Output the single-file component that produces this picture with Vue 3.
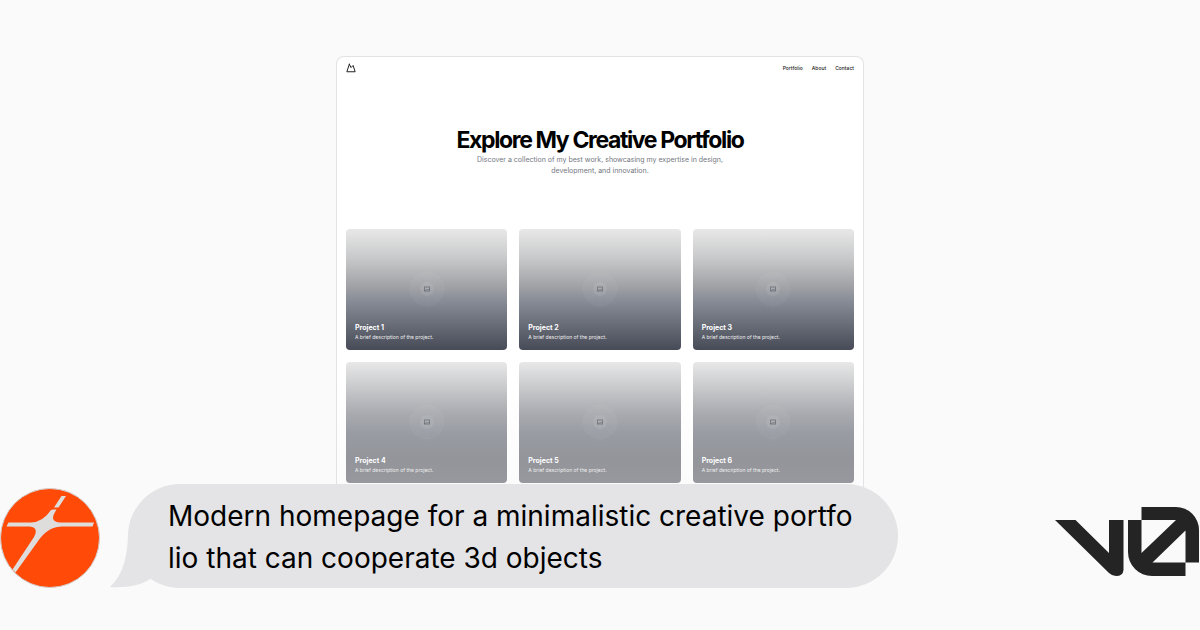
<script setup>
const links = ['Portfolio', 'About', 'Contact']
const projects = [1, 2, 3, 4, 5, 6]
</script>

<template>
  <main class="page">
    <section class="preview">
      <header class="bar">
        <a href="#" class="brand" aria-label="Home">
          <svg viewBox="0 0 24 24" fill="none" stroke="#222" stroke-width="2.4" stroke-linecap="round" stroke-linejoin="round">
            <path d="m8 3 4 8 5-5 5 15H2L8 3z" />
          </svg>
        </a>
        <nav class="links">
          <a v-for="link in links" :key="link" href="#">{{ link }}</a>
        </nav>
      </header>
      <div class="hero">
        <h1>Explore My Creative Portfolio</h1>
        <p>Discover a collection of my best work, showcasing my expertise in design, development, and innovation.</p>
      </div>
      <div class="grid">
        <article v-for="n in projects" :key="n" class="card" :class="{ faded: n > 3 }">
          <svg class="placeholder" viewBox="0 0 40 40" fill="none">
            <g stroke="#fff" stroke-opacity=".05" stroke-width=".6">
              <circle cx="20" cy="20" r="17" fill="#fff" fill-opacity=".04" />
              <path d="M20 0v40M0 20h40M6 6l28 28M34 6 6 34" />
            </g>
            <circle cx="20" cy="20" r="7" fill="#fff" fill-opacity=".08" />
            <rect x="17.5" y="18" width="5" height="4" stroke="#444952" stroke-opacity=".5" />
            <path d="m18 22 2-2 1 1 1-1" stroke="#444952" stroke-opacity=".5" stroke-width=".7" />
          </svg>
          <div class="caption">
            <h2>Project {{ n }}</h2>
            <p>A brief description of the project.</p>
          </div>
        </article>
      </div>
    </section>

    <footer class="prompt">
      <svg class="avatar" viewBox="0 0 100 100">
        <circle cx="50" cy="50" r="49.5" fill="#ff4a08" stroke="#d3d0d0" />
        <path fill="#dedddc" d="M8.500 34.500H31Q43 34 51 22L53 21.500H56.500L54.500 25C51 31 54 34.500 60 34.500H94L92.500 38.500H62C49 38.500 42 47 36 56L15.500 84.500L12.500 81.500L34 49C38 42 35 38.500 29 38.500H6.500Z" />
        <path fill="#dedddc" d="M61.500 8H66L58.500 19.500H54Z" />
      </svg>
      <div class="bubble">
        <svg class="tail" viewBox="0 0 48 56">
          <path fill="#e4e4e6" d="M18 0C18 24 13 43 0 55C17 56 32 53 40 47L48 24V0Z" />
        </svg>
        <p><span>Modern homepage for a minimalistic creative portfo</span><span>lio that can cooperate 3d objects</span></p>
      </div>
      <svg class="logo" viewBox="0 0 146 70" role="img" aria-label="v0">
        <g fill="#242424">
          <path d="M1 13H21.500L55 46V13H69.500V63Q69 69 62 69Q58 69 55 66Z" />
          <path d="M74 13H87.500V46L122 13H87.500V0H122A23 23 0 0 1 145 23V55.500H131.500V69H98A24 24 0 0 1 74 45ZM131.500 23.500 98.500 55.500H131.500Z" fill-rule="evenodd" />
        </g>
      </svg>
    </footer>
  </main>
</template>

<style>
body {
  margin: 0;
  background: #fafafa;
}
</style>

<style scoped>
.page {
  box-sizing: border-box;
  min-height: 100vh;
  padding-top: 56px;
  font-family: Inter, "Liberation Sans", sans-serif;
  color: #000;
}
h1, h2, p {
  margin: 0;
}
.preview {
  box-sizing: border-box;
  width: 44%;
  margin: 0 auto;
  padding: 0 9px 9px;
  border: 1px solid #e3e3e5;
  border-bottom: 0;
  border-radius: 8px 8px 0 0;
  background: linear-gradient(#fff 75%, #fbfbfb);
}
.bar {
  display: flex;
  align-items: center;
  justify-content: space-between;
  height: 22px;
}
.brand svg {
  display: block;
  width: 10px;
  height: 10px;
}
.links {
  display: flex;
  gap: 9px;
}
.links a {
  color: #222;
  font-size: 5px;
  font-weight: 500;
  line-height: 8px;
  text-decoration: none;
}
.hero {
  padding: 47px 0 53px;
  text-align: center;
}
.hero h1 {
  font-size: 23px;
  font-weight: 700;
  line-height: 28px;
  letter-spacing: -0.06em;
}
.hero p {
  max-width: 264px;
  margin: 0 auto;
  color: #73777f;
  font-size: 7px;
  line-height: 11px;
}
.grid {
  display: grid;
  grid-template-columns: repeat(3, 1fr);
  gap: 12px;
}
.card {
  display: grid;
  aspect-ratio: 4 / 3;
  overflow: hidden;
  border-radius: 4px;
  background: linear-gradient(#e8e8e8, #c8c9ca 24%, #a3a4a8 46%, #868b95 60%, #474b57);
}
.card.faded {
  background: linear-gradient(#e8e8e8, #a9abb0 42%, #989ba2 60%, #93959a 80%, #97989d);
}
.placeholder,
.caption {
  grid-area: 1 / 1;
}
.placeholder {
  place-self: center;
  width: 40px;
  height: 40px;
}
.caption {
  align-self: end;
  padding: 0 9px 8px;
  color: #fff;
}
.caption h2 {
  font-size: 7px;
  font-weight: 700;
  line-height: 10px;
}
.caption p {
  font-size: 5px;
  line-height: 9px;
  color: #eee;
}
.prompt {
  position: relative;
  display: flex;
  align-items: center;
  margin-top: -8px;
}
.avatar {
  flex: none;
  width: 100px;
  height: 100px;
  margin-top: 4px;
}
.bubble {
  position: relative;
  box-sizing: border-box;
  max-width: 770px;
  flex: 1;
  margin-left: 28px;
  padding: 11px 40px 9px;
  border-radius: 52px;
  background: #e4e4e6;
}
.bubble span {
  display: block;
  font-size: 28px;
  line-height: 42px;
}
.tail {
  position: absolute;
  left: -18px;
  bottom: 0;
  width: 48px;
  height: 56px;
}
.bubble p {
  position: relative;
}
.logo {
  flex: none;
  width: 146px;
  height: 70px;
  margin-left: auto;
  margin-top: 12px;
}
</style>
